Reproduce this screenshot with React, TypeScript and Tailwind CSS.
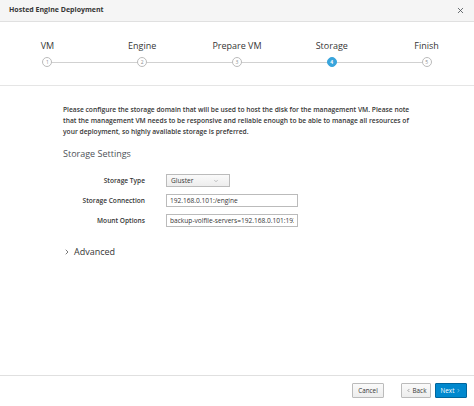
import { X, ChevronDown, ChevronRight, ChevronLeft } from 'lucide-react';

const STEPS = ['VM', 'Engine', 'Prepare VM', 'Storage', 'Finish'];
const ACTIVE = 3;

const Step = ({ label, index }: { label: string; index: number }) => (
  <div className="flex flex-col items-center">
    <span className="text-[9px] leading-[12px] text-[#363636]">{label}</span>
    <span
      className={`mt-[5px] w-[10px] h-[10px] rounded-full flex items-center justify-center text-[5px] leading-none relative z-10 ${
        index === ACTIVE
          ? 'bg-[#39a5dc] border border-[#39a5dc] text-white font-bold'
          : 'bg-white border border-[#bbbbbb] text-[#8b8d8f]'
      }`}
    >
      {index + 1}
    </span>
  </div>
);

const Row = ({ label, children }: { label: string; children: React.ReactNode }) => (
  <div className="flex items-center gap-[21px]">
    <span className="w-[82px] text-right text-[6.6px] font-semibold text-[#363636]">{label}</span>
    {children}
  </div>
);

const inputCls =
  'w-[132px] h-[13px] border border-[#bbbbbb] bg-white px-[3px] text-[6.6px] text-[#363636] outline-none';

export default function App() {
  return (
    <div
      className="w-[474px] h-[406px] bg-white flex flex-col text-[#363636]"
      style={{ fontFamily: '"Open Sans", "Liberation Sans", sans-serif' }}
    >
      <div className="h-[22px] shrink-0 bg-[#f5f5f5] border-b border-[#e0e0e0] flex items-center justify-between pl-[9px] pr-[9px]">
        <span className="text-[7px] font-bold">Hosted Engine Deployment</span>
        <X size={9} strokeWidth={2.2} className="text-[#4d5258]" />
      </div>

      <div className="h-[64px] shrink-0 border-b border-[#e5e5e5] pt-[18px] relative">
        <div className="absolute left-[10%] right-[10%] top-[40px] h-px bg-[#d1d1d1]" />
        <div className="grid grid-cols-5">
          {STEPS.map((s, i) => (
            <Step key={s} label={s} index={i} />
          ))}
        </div>
      </div>

      <div className="flex-1 pl-[63px] pt-[18px]">
        <p className="w-[350px] text-[6.7px] leading-[11px] font-semibold text-[#363636]">
          Please configure the storage domain that will be used to host the disk for the management VM. Please note
          that the management VM needs to be responsive and reliable enough to be able to manage all resources of
          your deployment, so highly available storage is preferred.
        </p>
        <h3 className="mt-[10px] text-[9px] leading-[14px] text-[#4d5258]">Storage Settings</h3>

        <div className="mt-[13px] flex flex-col gap-[7px]">
          <Row label="Storage Type">
            <div className="w-[64px] h-[13px] border border-[#bbbbbb] bg-gradient-to-b from-[#fafafa] to-[#ededed] flex items-center justify-between px-[4px]">
              <span className="text-[6.6px] text-[#363636]">Gluster</span>
              <ChevronDown size={6} className="text-[#8b8d8f] mr-[6px]" />
            </div>
          </Row>
          <Row label="Storage Connection">
            <input className={inputCls} readOnly value="192.168.0.101:/engine" />
          </Row>
          <Row label="Mount Options">
            <input className={inputCls} readOnly value="backup-volfile-servers=192.168.0.101:192.168.0.102" />
          </Row>
        </div>

        <div className="mt-[18px] flex items-center gap-[3px]">
          <ChevronRight size={8} strokeWidth={2} className="text-[#363636]" />
          <span className="text-[9px] text-[#363636]">Advanced</span>
        </div>
      </div>

      <div className="h-[31px] shrink-0 border-t border-[#e0e0e0] flex items-start justify-end pt-[7px] pr-[7px]">
        <button className="w-[32px] h-[15px] border border-[#bbbbbb] bg-gradient-to-b from-[#fafafa] to-[#ededed] text-[6.3px] text-[#363636] rounded-[1px]">
          Cancel
        </button>
        <button className="ml-[17px] w-[30px] h-[15px] border border-[#bbbbbb] bg-gradient-to-b from-[#fafafa] to-[#ededed] text-[6.3px] text-[#363636] rounded-[1px] flex items-center justify-center gap-[2px]">
          <ChevronLeft size={5} />
          Back
        </button>
        <button className="ml-[4px] w-[32px] h-[15px] border border-[#00659c] bg-[#0088ce] text-[6.3px] text-white rounded-[1px] flex items-center justify-center gap-[2px]">
          Next
          <ChevronRight size={5} />
        </button>
      </div>
    </div>
  );
}
